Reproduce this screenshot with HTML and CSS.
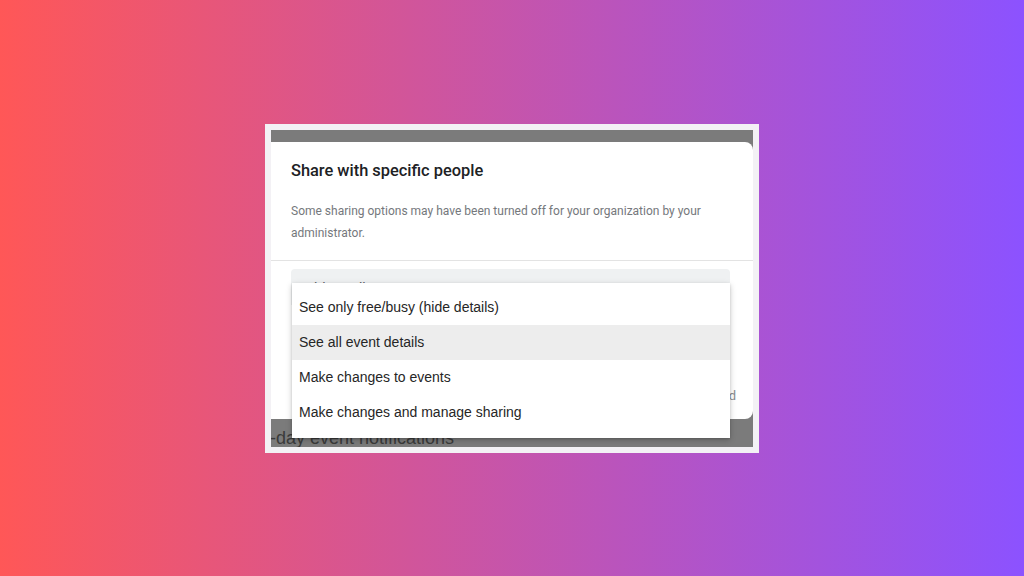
FILE: index.html
```html
<!DOCTYPE html>
<html lang="en">
<head>
<meta charset="utf-8">
<title>Share with specific people</title>
<link rel="stylesheet" href="styles.css">
</head>
<body>
<div class="stage">
  <div class="frame">
    <div class="shot">
      <div class="top-strip"></div>
      <div class="dialog">
        <h2 class="title">Share with specific people</h2>
        <p class="note">Some sharing options may have been turned off for your organization by your administrator.</p>
        <div class="divider"></div>
        <div class="field">Add email or name</div>
        <div class="footer"><span class="footer-link">Advanced</span></div>
      </div>
      <div class="below">-day event notifications</div>
      <ul class="menu">
        <li class="item">See only free/busy (hide details)</li>
        <li class="item active">See all event details</li>
        <li class="item">Make changes to events</li>
        <li class="item">Make changes and manage sharing</li>
      </ul>
    </div>
  </div>
</div>
</body>
</html>
```

FILE: styles.css
```css
html, body {
  margin: 0;
  padding: 0;
}
body {
  width: 1024px;
  height: 576px;
  overflow: hidden;
  background: linear-gradient(90deg, #ff5757 0%, #8c52ff 100%);
  font-family: "Liberation Sans", Arial, sans-serif;
}
.stage {
  width: 1024px;
  height: 576px;
  display: flex;
  align-items: center;
  justify-content: center;
}
.frame {
  width: 494px;
  height: 329px;
  box-sizing: border-box;
  padding: 6px;
  background: #f3f1f5;
}
.shot {
  position: relative;
  height: 317px;
  background: #7b7b7b;
  overflow: hidden;
  display: flex;
  flex-direction: column;
}
.top-strip {
  height: 12px;
  flex: none;
}
.dialog {
  height: 277px;
  flex: none;
  box-sizing: border-box;
  background: #ffffff;
  border-radius: 0 8px 8px 0;
  display: flex;
  flex-direction: column;
  padding-top: 19px;
}
.title {
  margin: 0 0 19px 20px;
  font-family: Roboto, "Liberation Sans", sans-serif;
  font-weight: 500;
  font-size: 16.4px;
  line-height: 20px;
  color: #202124;
}
.note {
  margin: 0 30px 0 20px;
  font-family: Roboto, "Liberation Sans", sans-serif;
  font-size: 12px;
  line-height: 22px;
  color: #75787c;
}
.divider {
  height: 1px;
  background: #e3e3e3;
  margin-top: 16px;
}
.field {
  margin: 8px 23px 0 20px;
  height: 36px;
  box-sizing: border-box;
  padding: 10px 8px;
  background: #eff1f2;
  border-radius: 4px 4px 0 0;
  font-size: 15px;
  color: #5f6368;
}
.footer {
  margin-top: auto;
  padding: 0 17px 12px 20px;
  height: 22px;
  display: flex;
  justify-content: flex-end;
  align-items: center;
}
.footer-link {
  font-family: Roboto, "Liberation Sans", sans-serif;
  font-size: 13px;
  color: #8a8d91;
}
.below {
  height: 28px;
  box-sizing: border-box;
  padding-top: 5px;
  line-height: 28px;
  margin-left: -1px;
  font-size: 18px;
  color: #3a3a3a;
  white-space: nowrap;
}
.menu {
  position: absolute;
  left: 21px;
  top: 153px;
  width: 438px;
  margin: 0;
  padding: 7px 0 8px;
  list-style: none;
  background: #ffffff;
  box-shadow: 0 2px 6px rgba(0, 0, 0, 0.22), 0 1px 2px rgba(0, 0, 0, 0.12);
}
.item {
  height: 35px;
  line-height: 35px;
  padding-left: 7px;
  font-size: 14px;
  color: #262626;
}
.item.active {
  background: #ededed;
}
```
